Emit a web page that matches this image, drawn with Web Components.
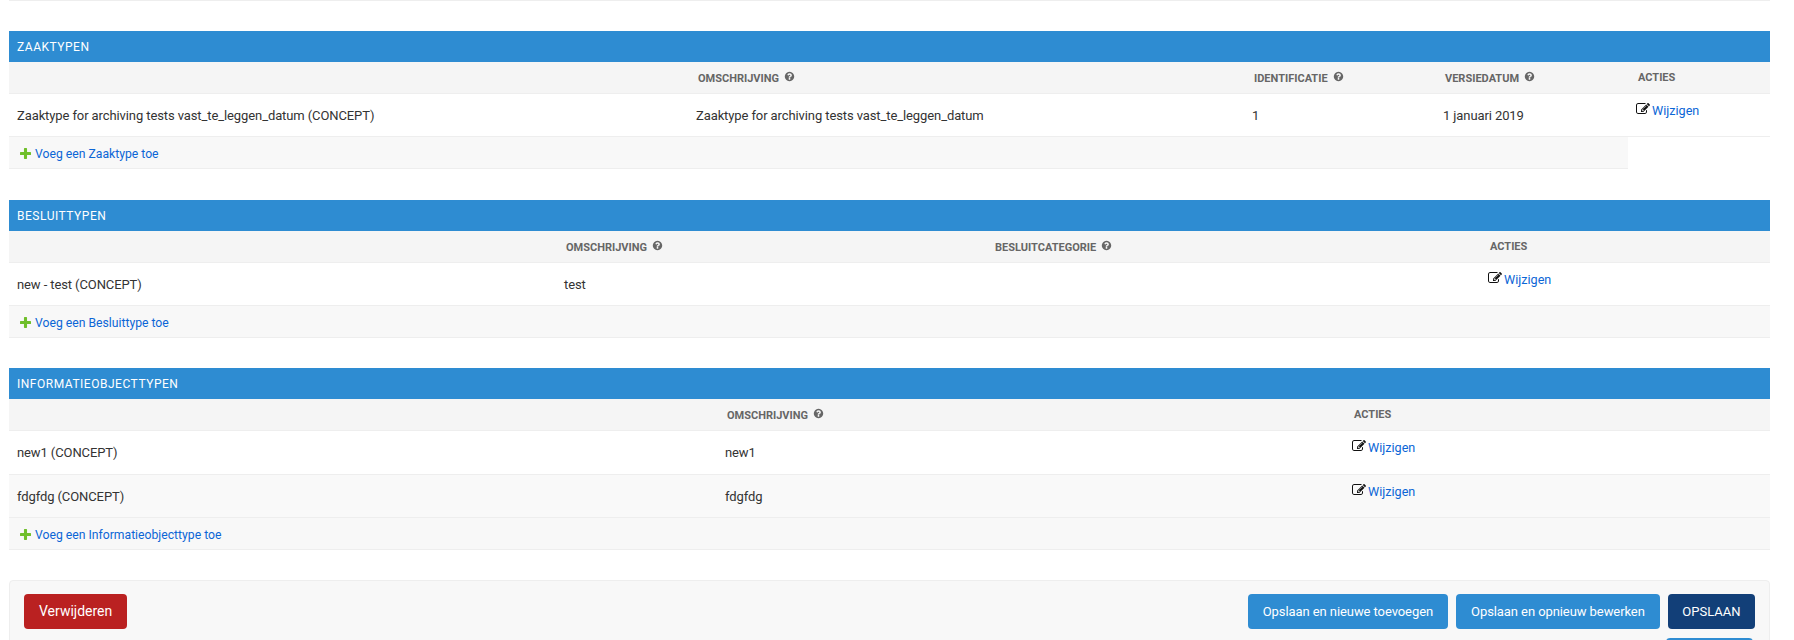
<!DOCTYPE html>
<html lang="nl"><head><meta charset="utf-8"><title>Catalogus</title>
<style>
html,body{margin:0;height:640px;overflow:hidden;background:#fff}
body{padding:0 24px 0 9px;font:13px/16px Roboto,"Liberation Sans",sans-serif;color:#333;letter-spacing:-.1px}
#topline{height:1px;background:#eee}
</style></head><body>
<div id="topline"></div>
<z-section heading="Zaaktypen" style="--cols:679px 556px 191px 193px 1fr;margin-top:30px">
  <z-row kind="head"><z-cell></z-cell><z-cell head help>Omschrijving</z-cell><z-cell head help>Identificatie</z-cell><z-cell head help>Versiedatum</z-cell><z-cell head>Acties</z-cell></z-row>
  <z-row><z-cell>Zaaktype for archiving tests vast_te_leggen_datum (CONCEPT)</z-cell><z-cell>Zaaktype for archiving tests vast_te_leggen_datum</z-cell><z-cell>1</z-cell><z-cell>1 januari 2019</z-cell><z-cell><z-edit></z-edit></z-cell></z-row>
  <z-add style="width:1619px">Voeg een Zaaktype toe</z-add>
</z-section>
<z-section heading="Besluittypen" style="--cols:547px 429px 495px 1fr">
  <z-row kind="head"><z-cell></z-cell><z-cell head help>Omschrijving</z-cell><z-cell head help>Besluitcategorie</z-cell><z-cell head>Acties</z-cell></z-row>
  <z-row><z-cell>new - test (CONCEPT)</z-cell><z-cell>test</z-cell><z-cell></z-cell><z-cell><z-edit></z-edit></z-cell></z-row>
  <z-add>Voeg een Besluittype toe</z-add>
</z-section>
<z-section heading="Informatieobjecttypen" style="--cols:708px 627px 1fr;margin-top:30px">
  <z-row kind="head"><z-cell></z-cell><z-cell head help>Omschrijving</z-cell><z-cell head>Acties</z-cell></z-row>
  <z-row style="height:43px"><z-cell>new1 (CONCEPT)</z-cell><z-cell>new1</z-cell><z-cell><z-edit></z-edit></z-cell></z-row>
  <z-row kind="alt"><z-cell>fdgfdg (CONCEPT)</z-cell><z-cell>fdgfdg</z-cell><z-cell><z-edit></z-edit></z-cell></z-row>
  <z-add>Voeg een Informatieobjecttype toe</z-add>
</z-section>
<z-submit>
  <z-button slot="left" tone="danger">Verwijderen</z-button>
  <z-button>Opslaan en nieuwe toevoegen</z-button>
  <z-button>Opslaan en opnieuw bewerken</z-button>
  <z-button tone="dark">OPSLAAN</z-button>
  <z-button class="wrapped"></z-button>
</z-submit>
<script>
const def=(name,css,html,setup)=>customElements.define(name,class extends HTMLElement{
  constructor(){super();this.attachShadow({mode:'open'}).innerHTML=`<style>${css}</style>${html}`}
  connectedCallback(){setup&&setup(this)}
});
const HELP='<svg viewBox="0 0 1792 1792" width="11" height="11" fill="#666"><path d="M1024 1376v-192q0-14-9-23t-23-9h-192q-14 0-23 9t-9 23v192q0 14 9 23t23 9h192q14 0 23-9t9-23zm256-672q0-88-55.5-163t-138.5-116-170-41q-243 0-371 213-15 24 8 42l132 100q7 6 19 6 16 0 25-12 53-68 86-92 34-24 86-24 48 0 85.5 26t37.5 59q0 38-20 61t-68 45q-63 28-115.5 86.5t-52.5 125.5v36q0 14 9 23t23 9h192q14 0 23-9t9-23q0-19 21.5-49.5t54.5-49.5q32-18 49-28.5t46-35 44.5-48 28-60.5 12.5-81zm384 192q0 209-103 385.5t-279.5 279.5-385.5 103-385.5-103-279.5-279.5-103-385.5 103-385.5 279.5-279.5 385.5-103 385.5 103 279.5 279.5 103 385.5z"/></svg>';
def('z-section',`:host{display:block;margin-top:31px}
h2{margin:0;height:30px;padding:1px 0 0 8px;background:#2e8cd2;color:#fff;font:400 12px/31px Roboto,sans-serif;letter-spacing:.52px;text-transform:uppercase}`,
`<h2></h2><slot></slot>`,el=>{el.shadowRoot.querySelector('h2').textContent=el.getAttribute('heading')});
def('z-row',`:host{display:grid;grid-template-columns:var(--cols);height:42px;border-bottom:1px solid #eee;background:#fff}
:host([kind=head]){height:31px;background:#f5f5f5}
:host([kind=alt]){background:#f9f9f9}`,`<slot></slot>`);
def('z-cell',`:host{display:block;padding:14px 8px 0 8px;min-width:0;white-space:nowrap}
:host([head]){padding:9px 0 0 10px;font-size:11px;font-weight:700;color:#666;text-transform:uppercase;line-height:14px;letter-spacing:0}
svg{margin-left:5px;vertical-align:0}`,`<slot></slot><span id="h"></span>`,el=>{if(el.hasAttribute('help'))el.shadowRoot.getElementById('h').innerHTML=HELP});
def('z-edit',`:host{display:block;margin:-6px 0 0 0;font-size:12.6px;line-height:16px;color:#0c66d6;letter-spacing:0}
svg{vertical-align:-1px;margin-right:2px}`,
`<svg viewBox="0 0 1792 1792" width="14" height="14" fill="#111"><path d="M888 1184l116-116-152-152-116 116v56h96v96h56zm440-720q-16-16-33 1l-350 350q-17 17-1 33t33-1l350-350q17-17 1-33zm80 594v190q0 119-84.500 203.500t-203.500 84.500h-832q-119 0-203.500-84.500t-84.500-203.500v-832q0-119 84.500-203.500t203.500-84.500h832q63 0 117 25 15 7 18 23 3 17-9 29l-49 49q-14 14-32 8-23-6-45-6h-832q-66 0-113 47t-47 113v832q0 66 47 113t113 47h832q66 0 113-47t47-113v-126q0-13 9-22l64-64q15-15 35-7t20 29zm-96-738l288 288-672 672h-288v-288zm444 132l-92 92-288-288 92-92q28-28 68-28t68 28l152 152q28 28 28 68t-28 68z"/></svg>Wijzigen`);
def('z-add',`:host{display:flex;box-sizing:border-box;align-items:center;height:32px;padding-top:2px;background:#f8f8f8;border-bottom:1px solid #eee;padding-left:11px;font-size:12.2px;color:#0c66d6;letter-spacing:0}
svg{margin-right:4px}`,`<svg viewBox="0 0 10 10" width="11" height="11" fill="#70bf2b"><path d="M3.600.6Q3.600 0 4.200 0h1.600q.6 0 .6.6v3h3q.6 0 .6.6v1.600q0 .6-.6.6h-3v3q0 .6-.6.6H4.200q-.6 0-.6-.6v-3h-3Q0 6.400 0 5.800V4.200q0-.6.6-.6h3z"/></svg><slot></slot>`);
def('z-submit',`:host{display:flex;justify-content:space-between;margin-top:30px;padding:13px 14px 20px;background:#f8f8f8;border:1px solid #eee;border-radius:4px}
#r{display:flex;flex-wrap:wrap;justify-content:flex-end;gap:9px 8px;width:520px}`,`<slot name="left"></slot><div id="r"><slot></slot></div>`);
def('z-button',`:host{display:block;height:35px;padding:0 15px;box-sizing:border-box;border-radius:4px;background:#2e8cd2;color:#fff;font-size:13px;line-height:35px;white-space:nowrap;letter-spacing:-.08px}
:host([tone=danger]){background:#ba2121;font-size:14px;letter-spacing:0}
:host([tone=dark]){background:#123f78;letter-spacing:0;padding:0 14.5px}
:host(.wrapped){width:87px;margin-right:2px}`,`<slot></slot>`);
</script>
</body></html>
